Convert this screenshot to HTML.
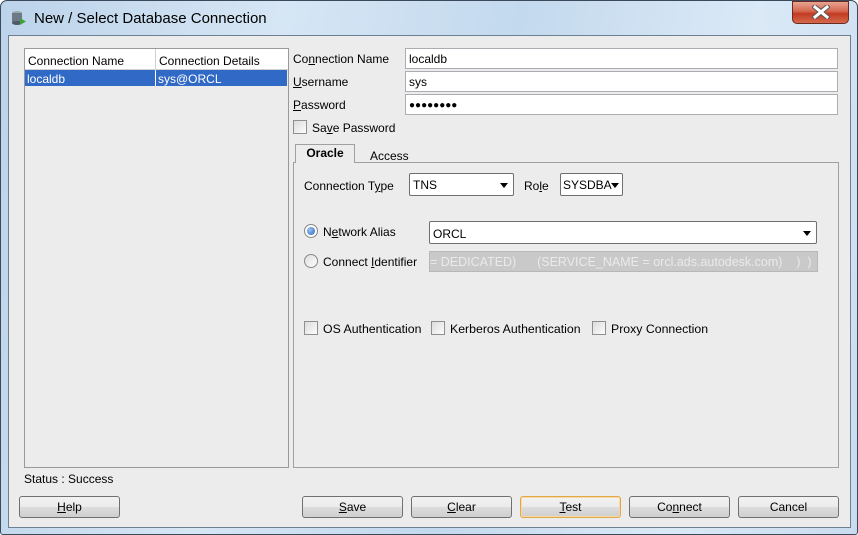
<!DOCTYPE html>
<html><head><style>
*{box-sizing:border-box;margin:0;padding:0}
body{width:858px;height:535px;overflow:hidden;background:#fff;font-family:"Liberation Sans",sans-serif;font-size:12px;color:#000;position:relative}
.a{position:absolute}
.t{margin-top:1px}
.frame{left:0;top:0;width:858px;height:535px;border:1px solid #3a4a5a;border-radius:7px 7px 3px 3px;background:linear-gradient(100deg,#bcd3ea 0%,#d6e6f5 30%,#c3d9ee 55%,#dbe9f6 80%,#c9dcef 100%)}
.inner{left:8px;top:35px;width:843px;height:493px;background:#ececec;border:1px solid #6e7f90}
.box{background:#fff;border:1px solid #abadb3;height:21px;padding:3px 3px 1px;line-height:15px}
.btn{height:22px;border:1px solid #707070;border-radius:3px;background:linear-gradient(#f2f2f2,#ebebeb 50%,#dddddd 51%,#cfcfcf);text-align:center;line-height:21px}
.cb{width:14px;height:14px;border:1px solid #8f8f8f;background:linear-gradient(135deg,#dcdcdc,#fcfcfc)}
.combo{background:#fff;border:1px solid #707070;border-radius:2px;height:23px;line-height:23px;padding-left:3px}
.arr{position:absolute;right:5px;top:9px;width:0;height:0;border-left:4px solid transparent;border-right:4px solid transparent;border-top:5px solid #000}
u{text-decoration:underline}
</style></head><body>
<div class="a frame"></div>
<svg class="a" style="left:10px;top:9px" width="18" height="18" viewBox="0 0 18 18"><ellipse cx="7" cy="4" rx="5" ry="2" fill="#9aa"/><rect x="2" y="4" width="10" height="10" fill="#6d7a86"/><ellipse cx="7" cy="14" rx="5" ry="2" fill="#4d5a66"/><path d="M10 9 L16 12.5 L10 16Z" fill="#3aa33a"/></svg>
<div class="a" style="left:34px;top:10px;font-size:15px;color:#000">New / Select Database Connection</div>
<div class="a" style="left:792px;top:1px;width:57px;height:23px;border:1px solid #6b2a22;border-radius:0 0 5px 5px;background:linear-gradient(#e8a493,#d4654d 45%,#c23a22 55%,#d56a4c)"></div>
<svg class="a" style="left:812px;top:5px" width="18" height="14" viewBox="0 0 18 14"><path d="M3 2 L15 12 M15 2 L3 12" stroke="#555" stroke-width="5" stroke-linecap="square"/><path d="M3 2 L15 12 M15 2 L3 12" stroke="#fff" stroke-width="3" stroke-linecap="square"/></svg>
<div class="a inner"></div>

<div class="a" style="left:24px;top:48px;width:265px;height:420px;background:#ececec;border:1px solid #9a9a9a"></div>
<div class="a" style="left:25px;top:49px;width:263px;height:21px;background:#fff;border-bottom:1px solid #d0d0d0"></div>
<div class="a" style="left:155px;top:49px;width:1px;height:38px;background:#d0d0d0"></div>
<div class="a" style="left:28px;top:54px">Connection Name</div>
<div class="a" style="left:159px;top:54px">Connection Details</div>
<div class="a" style="left:25px;top:70px;width:262px;height:16px;background:#3169c6"></div>
<div class="a" style="left:155px;top:70px;width:1px;height:16px;background:#fff"></div>
<div class="a" style="left:27px;top:72px;color:#fff">localdb</div>
<div class="a" style="left:158px;top:72px;color:#fff">sys@ORCL</div>

<div class="a" style="left:293px;top:52px">Co<u>n</u>nection Name</div>
<div class="a" style="left:293px;top:75px"><u>U</u>sername</div>
<div class="a" style="left:293px;top:98px"><u>P</u>assword</div>
<div class="a box" style="left:405px;top:48px;width:433px">localdb</div>
<div class="a box" style="left:405px;top:71px;width:433px">sys</div>
<div class="a box" style="left:405px;top:94px;width:433px;letter-spacing:0px;font-size:10px;padding-top:3px">●●●●●●●●</div>
<div class="a cb" style="left:293px;top:120px"></div>
<div class="a" style="left:312px;top:121px">Sa<u>v</u>e Password</div>

<div class="a" style="left:293px;top:162px;width:546px;height:306px;border:1px solid #a0a0a0;background:#ececec"></div>
<div class="a" style="left:295px;top:144px;width:60px;height:19px;border:1px solid #a0a0a0;border-bottom:none;background:#ececec;font-weight:bold;text-align:center;line-height:16px">Oracle</div>
<div class="a" style="left:370px;top:149px">Access</div>

<div class="a" style="left:304px;top:179px">Connection T<u>y</u>pe</div>
<div class="a combo" style="left:409px;top:173px;width:105px">TNS<div class="arr"></div></div>
<div class="a" style="left:524px;top:179px">Ro<u>l</u>e</div>
<div class="a combo" style="left:560px;top:173px;width:63px;padding-left:2px">SYSDBA<div class="arr" style="right:3px"></div></div>

<div class="a" style="left:304px;top:224px;width:14px;height:14px;border-radius:50%;border:1px solid #888;background:#fff"><div style="margin:2px;width:8px;height:8px;border-radius:50%;background:radial-gradient(circle at 35% 35%,#9cc4f4,#2a64b8)"></div></div>
<div class="a" style="left:323px;top:225px">N<u>e</u>twork Alias</div>
<div class="a combo" style="left:429px;top:221px;width:388px;height:23px;line-height:24px">ORCL<div class="arr" style="top:9px"></div></div>
<div class="a" style="left:304px;top:254px;width:14px;height:14px;border-radius:50%;border:1px solid #888;background:linear-gradient(135deg,#ddd,#fff)"></div>
<div class="a" style="left:323px;top:255px">Connect <u>I</u>dentifier</div>
<div class="a" style="left:429px;top:251px;width:389px;height:21px;background:#c9c9c9;border:1px solid #b8b8b8;color:#eaeaea;line-height:20px;white-space:pre;overflow:hidden;font-size:12.5px">= DEDICATED)      (SERVICE_NAME = orcl.ads.autodesk.com)    )  )</div>

<div class="a cb" style="left:304px;top:321px"></div>
<div class="a" style="left:323px;top:322px;font-size:12.3px">OS Authentication</div>
<div class="a cb" style="left:431px;top:321px"></div>
<div class="a" style="left:450px;top:322px;font-size:12.3px">Kerberos Authentication</div>
<div class="a cb" style="left:592px;top:321px"></div>
<div class="a" style="left:611px;top:322px;font-size:12.3px">Proxy Connection</div>

<div class="a" style="left:24px;top:472px">Status : Success</div>

<div class="a btn" style="left:19px;top:496px;width:101px"><u>H</u>elp</div>
<div class="a btn" style="left:302px;top:496px;width:101px"><u>S</u>ave</div>
<div class="a btn" style="left:411px;top:496px;width:101px"><u>C</u>lear</div>
<div class="a btn" style="left:520px;top:496px;width:101px;border-color:#e0a84a;box-shadow:inset 0 0 0 1px #f8d9a0"><u>T</u>est</div>
<div class="a btn" style="left:629px;top:496px;width:101px">Co<u>n</u>nect</div>
<div class="a btn" style="left:738px;top:496px;width:101px">Cancel</div>
</body></html>
